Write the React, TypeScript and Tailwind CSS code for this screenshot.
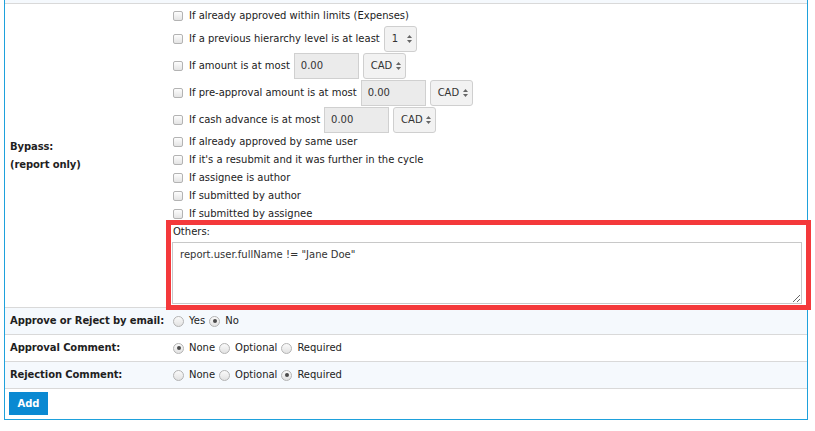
import React from 'react';

const Check = () => (
  <span className="inline-block h-[10px] w-[10px] shrink-0 rounded-[2px] border border-[#b3b3b3] bg-gradient-to-b from-[#fdfdfd] to-[#e4e4e4]" />
);

const Radio = ({ checked = false }: { checked?: boolean }) => (
  <span className="inline-flex h-[11px] w-[11px] shrink-0 items-center justify-center rounded-full border border-[#b3b3b3] bg-gradient-to-b from-[#fafafa] to-[#e2e2e2]">
    {checked && <span className="h-[4px] w-[4px] rounded-full bg-[#4a4a4a]" />}
  </span>
);

const Arrows = () => (
  <svg width="5" height="8" viewBox="0 0 5 8" className="shrink-0">
    <path d="M2.5 0 L5 3 L0 3 Z" fill="#666" />
    <path d="M2.5 8 L5 5 L0 5 Z" fill="#666" />
  </svg>
);

const Select = ({ value, width }: { value: string; width: string }) => (
  <span
    className={`ml-[4px] flex h-[26px] ${width} items-center justify-between rounded-[3px] border border-[#cfcfcf] bg-[#f2f2f2] pl-[7px] pr-[4px] text-[#333]`}
  >
    <span>{value}</span>
    <Arrows />
  </span>
);

const Amount = () => (
  <span className="ml-[4px] flex h-[26px] w-[65px] items-center border border-[#d0d0d0] bg-[#ebebeb] pl-[6px] text-[#333]">
    0.00
  </span>
);

const CheckLine = ({ children }: { children: React.ReactNode }) => (
  <div className="flex h-[18px] items-center">
    <Check />
    <span className="ml-[6px] whitespace-nowrap">{children}</span>
  </div>
);

const Row = ({
  label,
  light = false,
  children,
}: {
  label: React.ReactNode;
  light?: boolean;
  children: React.ReactNode;
}) => (
  <div className={`flex border-b border-[#d9d9d9] ${light ? 'bg-[#f5f9fd]' : 'bg-white'}`}>
    <div className="flex w-[163px] shrink-0 items-center whitespace-nowrap pl-[5px] font-bold tracking-[-0.1px] text-[#1f1f1f]">
      {label}
    </div>
    <div className="flex-1 pl-[5px]">{children}</div>
  </div>
);

const RadioGroup = ({ options, selected }: { options: string[]; selected: number }) => (
  <div className="flex h-[26px] items-center">
    {options.map((o, i) => (
      <span key={o} className={`flex items-center ${i > 0 ? 'ml-[4px]' : ''}`}>
        <Radio checked={i === selected} />
        <span className="ml-[5px]">{o}</span>
      </span>
    ))}
  </div>
);

export default function App() {
  return (
    <div className="min-h-screen bg-white font-['DejaVu_Sans',sans-serif] text-[10px] leading-[18px] text-[#222]">
      <div className="ml-[4px] w-[804px] border-x border-b border-[#1ea1dc]">
        <div className="h-[4px] border-b border-[#d9d9d9] bg-[#f5f9fd]" />

        <Row
          label={
            <div>
              <div>Bypass:</div>
              <div>(report only)</div>
            </div>
          }
        >
          <div className="pt-[3px] pb-[3px]">
            <CheckLine>If already approved within limits (Expenses)</CheckLine>
            <div className="flex h-[27px] items-center">
              <Check />
              <span className="ml-[6px] whitespace-nowrap">If a previous hierarchy level is at least</span>
              <Select value="1" width="w-[33px]" />
            </div>
            <div className="flex h-[27px] items-center">
              <Check />
              <span className="ml-[6px] whitespace-nowrap">If amount is at most</span>
              <Amount />
              <Select value="CAD" width="w-[43px]" />
            </div>
            <div className="flex h-[27px] items-center">
              <Check />
              <span className="ml-[6px] whitespace-nowrap">If pre-approval amount is at most</span>
              <Amount />
              <Select value="CAD" width="w-[43px]" />
            </div>
            <div className="flex h-[27px] items-center">
              <Check />
              <span className="ml-[6px] whitespace-nowrap">If cash advance is at most</span>
              <Amount />
              <Select value="CAD" width="w-[43px]" />
            </div>
            <CheckLine>If already approved by same user</CheckLine>
            <CheckLine>If it's a resubmit and it was further in the cycle</CheckLine>
            <CheckLine>If assignee is author</CheckLine>
            <CheckLine>If submitted by author</CheckLine>
            <CheckLine>If submitted by assignee</CheckLine>

            <div className="relative">
              <div className="pointer-events-none absolute -top-[3px] -right-[4px] -bottom-[6px] -left-[7px] border-[5px] border-[#f4393b]" />
              <div className="h-[18px]">Others:</div>
              <textarea
                defaultValue={'report.user.fullName != "Jane Doe"'}
                className="-ml-[1px] mt-[1px] block h-[62px] w-[630px] border border-[#c8c8c8] px-[7px] pt-[3px] font-['DejaVu_Sans',sans-serif] text-[10px] leading-[18px] text-[#333] outline-none"
              />
            </div>
          </div>
        </Row>

        <Row label="Approve or Reject by email:" light>
          <RadioGroup options={['Yes', 'No']} selected={1} />
        </Row>
        <Row label="Approval Comment:">
          <RadioGroup options={['None', 'Optional', 'Required']} selected={0} />
        </Row>
        <Row label="Rejection Comment:" light>
          <RadioGroup options={['None', 'Optional', 'Required']} selected={2} />
        </Row>

        <div className="bg-white pt-[3px] pb-[4px] pl-[4px]">
          <button className="h-[23px] w-[39px] bg-[#0a89d2] font-bold text-white">Add</button>
        </div>
      </div>
    </div>
  );
}
